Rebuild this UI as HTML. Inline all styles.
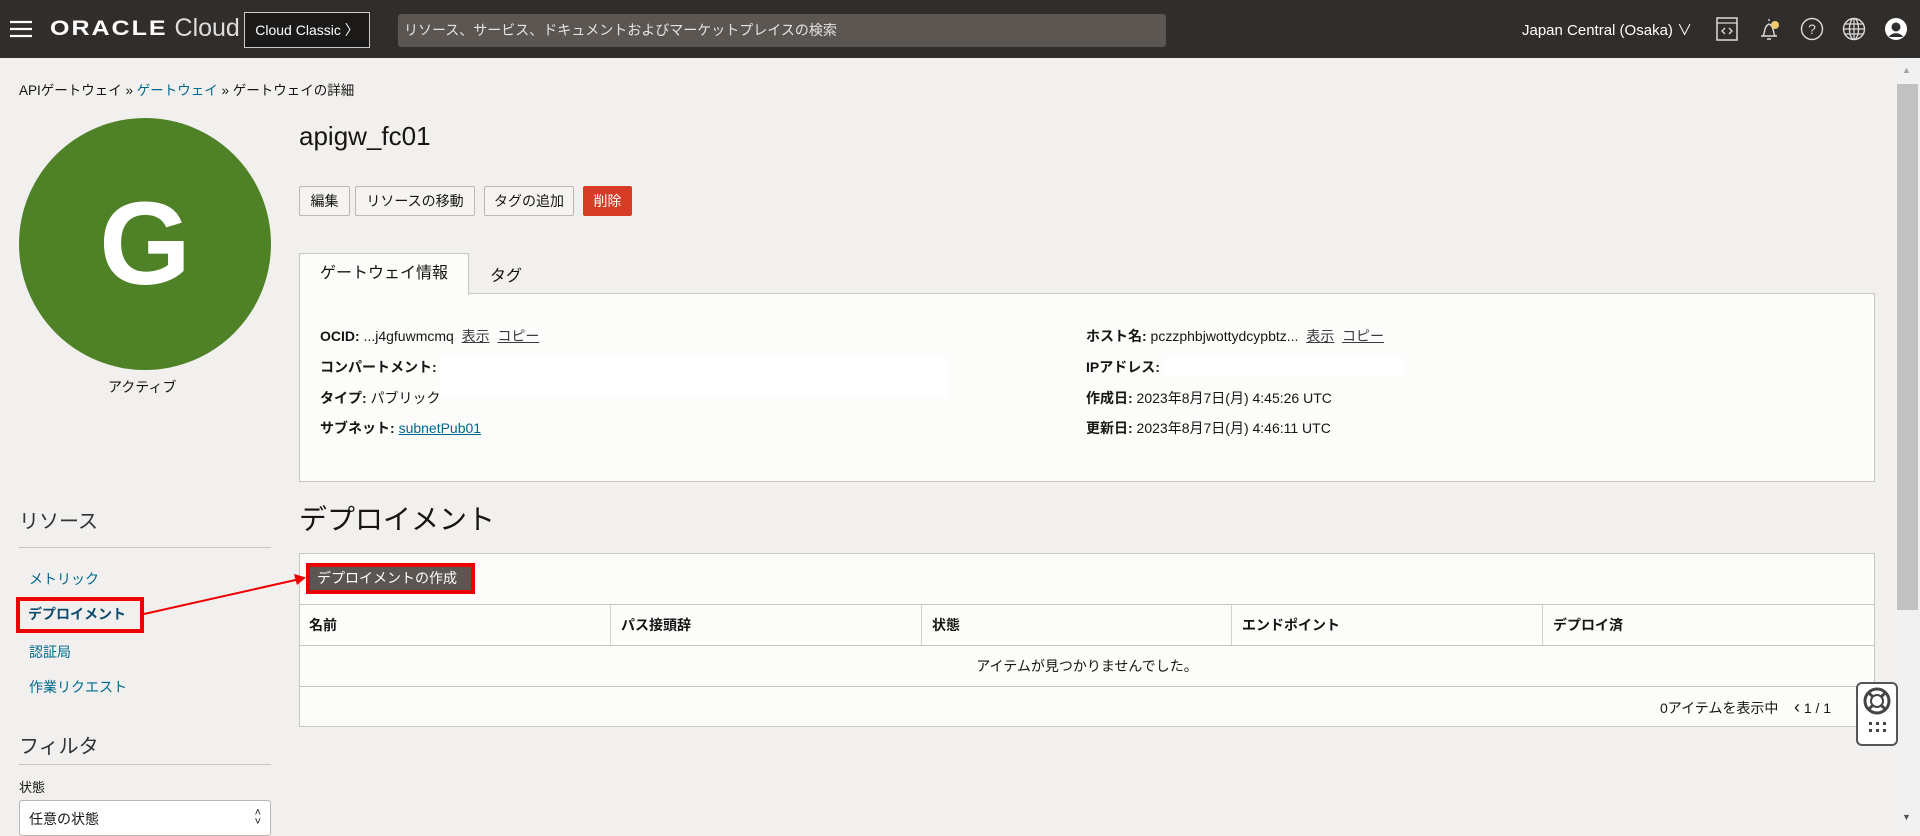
<!DOCTYPE html>
<html><head><meta charset="utf-8"><style>
*{box-sizing:border-box;margin:0;padding:0}
body{width:1920px;height:829px;overflow:hidden;background:#f1f0ef;font-family:"Liberation Sans","Noto Sans CJK JP",sans-serif;color:#161513;font-size:14px;position:relative}
.a{position:absolute;white-space:nowrap}
#hdr{position:absolute;left:0;top:0;width:1920px;height:58px;background:#312d2a}
.link{color:#00688c}
.btn{position:absolute;top:186px;height:30px;border:1px solid #bcb8b4;background:#f5f4f2;border-radius:2px;font-size:14px;line-height:28px;text-align:center}
.panel{position:absolute;background:#fcfcfb;border:1px solid #c9c6c2}
.lbl{font-weight:bold}
u{color:#3b3b3b}
.th{position:absolute;top:0;height:40px;line-height:40px;font-weight:bold;padding-left:10px;border-left:1px solid #d4d1cd}
</style></head><body>
<div id="hdr">
 <svg class="a" style="left:9px;top:19px" width="24" height="20"><path d="M1 3H23M1 10H23M1 17H23" stroke="#fff" stroke-width="2.2"/></svg>
 <div class="a" style="left:50px;top:14px;color:#fff;font-size:25px"><span style="letter-spacing:2px;font-weight:bold;transform:scaleY(0.85);display:inline-block">ORACLE</span> <span style="color:#ddd">Cloud</span></div>
 <div class="a" style="left:244px;top:12px;width:126px;height:36px;border:1px solid #ccc;background:#1c1a18;color:#fff;font-size:14px;line-height:34px;text-align:center">Cloud Classic 〉</div>
 <div class="a" style="left:398px;top:14px;width:768px;height:33px;background:#5b5652;border-radius:3px;color:#e6e3e0;font-size:14px;line-height:33px;padding-left:6px">リソース、サービス、ドキュメントおよびマーケットプレイスの検索</div>
 <div class="a" style="left:1522px;top:19px;color:#fff;font-size:15px">Japan Central (Osaka) ∨</div>
 <svg class="a" style="left:1716px;top:17px" width="22" height="24"><rect x="1" y="1" width="20" height="22" fill="none" stroke="#ddd" stroke-width="1.5"/><path d="M1 6H21M9 11l-3 3 3 3M13 11l3 3-3 3" stroke="#ddd" fill="none" stroke-width="1.3"/></svg>
 <svg class="a" style="left:1758px;top:17px" width="24" height="26"><path d="M11 2v2M5 19c2-3 1-10 6-12 5 2 4 9 6 12zM3 19H19M9 22h4" stroke="#ddd" fill="none" stroke-width="1.4"/><circle cx="17" cy="8" r="4" fill="#f0cc71"/></svg>
 <svg class="a" style="left:1800px;top:17px" width="24" height="24"><circle cx="12" cy="12" r="10.5" stroke="#ddd" fill="none" stroke-width="1.4"/><text x="12" y="17" fill="#ddd" font-size="14" text-anchor="middle" font-family="Liberation Sans">?</text></svg>
 <svg class="a" style="left:1842px;top:17px" width="24" height="24"><circle cx="12" cy="12" r="10.5" stroke="#ddd" fill="none" stroke-width="1.4"/><ellipse cx="12" cy="12" rx="4.5" ry="10.5" stroke="#ddd" fill="none" stroke-width="1.3"/><path d="M1.5 12H22.5M3 7H21M3 17H21M12 1.5V22.5" stroke="#ddd" stroke-width="1.2"/></svg>
 <svg class="a" style="left:1884px;top:17px" width="24" height="24"><circle cx="12" cy="12" r="11" fill="#fff"/><circle cx="12" cy="10" r="4.5" fill="#312d2a"/><path d="M5 20c2-5 12-5 14 0" fill="#312d2a"/></svg>
</div>
<div class="a" style="left:1896px;top:58px;width:24px;height:771px;background:#f1f1f1"></div>
<div class="a" style="left:1897px;top:84px;width:21px;height:526px;background:#c1c1c1"></div>
<div class="a" style="left:1902px;top:65px;font-size:9px;color:#a3a3a3">▲</div>
<div class="a" style="left:1902px;top:812px;font-size:9px;color:#505050">▼</div>

<div class="a" style="left:19px;top:79px;font-size:13.5px">APIゲートウェイ » <span class="link">ゲートウェイ</span> » ゲートウェイの詳細</div>
<div class="a" style="left:19px;top:118px;width:252px;height:252px;border-radius:50%;background:#4f8226;color:#fff;font-size:118px;font-weight:bold;text-align:center;line-height:252px">G</div>
<div class="a" style="left:108px;top:377px;font-size:14px">アクティブ</div>

<div class="a" style="left:299px;top:121px;font-size:26px">apigw_fc01</div>
<div class="btn" style="left:299px;width:51px">編集</div>
<div class="btn" style="left:355px;width:120px">リソースの移動</div>
<div class="btn" style="left:484px;width:90px">タグの追加</div>
<div class="btn" style="left:583px;width:49px;background:#d63b25;border-color:#d63b25;color:#fff">削除</div>

<div class="a" style="left:299px;top:253px;width:170px;height:42px;background:#fcfcfb;border:1px solid #c9c6c2;border-bottom:none;z-index:2;font-size:16px;line-height:40px;text-align:center">ゲートウェイ情報</div>
<div class="a" style="left:490px;top:262px;font-size:16px">タグ</div>
<div class="panel" style="left:299px;top:293px;width:1576px;height:189px"></div>
<div class="a" style="left:440px;top:358px;width:507px;height:40px;background:#fff"></div>
<div class="a" style="left:1163px;top:358px;width:240px;height:18px;background:#fff"></div>
<div class="a" style="left:320px;top:326px"><span class="lbl">OCID:</span> ...j4gfuwmcmq &nbsp;<u>表示</u> &nbsp;<u>コピー</u></div>
<div class="a" style="left:320px;top:357px"><span class="lbl">コンパートメント:</span></div>
<div class="a" style="left:320px;top:388px"><span class="lbl">タイプ:</span> パブリック</div>
<div class="a" style="left:320px;top:418px"><span class="lbl">サブネット:</span> <u class="link" style="color:#00688c">subnetPub01</u></div>
<div class="a" style="left:1086px;top:326px"><span class="lbl">ホスト名:</span> pczzphbjwottydcypbtz... &nbsp;<u>表示</u> &nbsp;<u>コピー</u></div>
<div class="a" style="left:1086px;top:357px"><span class="lbl">IPアドレス:</span></div>
<div class="a" style="left:1086px;top:388px"><span class="lbl">作成日:</span> 2023年8月7日(月) 4:45:26 UTC</div>
<div class="a" style="left:1086px;top:418px"><span class="lbl">更新日:</span> 2023年8月7日(月) 4:46:11 UTC</div>

<div class="a" style="left:19px;top:505px;font-size:20px;color:#333">リソース</div>
<div class="a" style="left:19px;top:547px;width:252px;height:1px;background:#c9c6c2"></div>
<div class="a link" style="left:29px;top:569px">メトリック</div>
<div class="a" style="left:16px;top:597px;width:128px;height:36px;border:4px solid #e00"></div>
<div class="a" style="left:28px;top:604px;color:#0c4a6e;font-weight:bold">デプロイメント</div>
<div class="a link" style="left:29px;top:642px">認証局</div>
<div class="a link" style="left:29px;top:677px">作業リクエスト</div>
<div class="a" style="left:19px;top:730px;font-size:20px;color:#333">フィルタ</div>
<div class="a" style="left:19px;top:764px;width:252px;height:1px;background:#c9c6c2"></div>
<div class="a" style="left:19px;top:777px;font-size:13px">状態</div>
<div class="a" style="left:19px;top:800px;width:252px;height:36px;background:#fff;border:1px solid #b8b5b2;border-radius:3px;padding:8px 9px">任意の状態<span style="float:right;font-size:11px;line-height:9px;text-align:center">˄<br>˅</span></div>

<div class="a" style="left:299px;top:498px;font-size:28px">デプロイメント</div>
<div class="panel" style="left:299px;top:553px;width:1576px;height:174px"></div>
<div class="a" style="left:306px;top:563px;width:169px;height:31px;border:4px solid #e00;background:#5b5652;color:#fff;font-size:14px;line-height:23px;padding-left:7px">デプロイメントの作成</div>
<svg class="a" style="left:140px;top:570px;overflow:visible" width="170" height="50"><path d="M4 44L160 9" stroke="#e00" stroke-width="2"/><path d="M166 7.5L154 4L157 15z" fill="#e00"/></svg>
<div class="a" style="left:299px;top:604px;width:1576px;height:42px;border-top:1px solid #c9c6c2;border-bottom:1px solid #c9c6c2">
 <div class="th" style="left:0;border-left:none">名前</div>
 <div class="th" style="left:311px">パス接頭辞</div>
 <div class="th" style="left:622px">状態</div>
 <div class="th" style="left:932px">エンドポイント</div>
 <div class="th" style="left:1243px">デプロイ済</div>
</div>
<div class="a" style="left:299px;top:646px;width:1576px;height:41px;border-bottom:1px solid #c9c6c2;text-align:center;line-height:40px">アイテムが見つかりませんでした。</div>
<div class="a" style="left:1660px;top:697px">0アイテムを表示中 &nbsp;&nbsp; <span style="font-size:18px">‹</span> 1 / 1</div>

<div class="a" style="left:1856px;top:682px;width:42px;height:64px;background:#fff;border:2px solid #555;border-radius:6px"></div>
<svg class="a" style="left:1859px;top:686px" width="36" height="58"><circle cx="18" cy="15" r="12" fill="none" stroke="#444" stroke-width="3"/><circle cx="18" cy="15" r="6" fill="none" stroke="#444" stroke-width="2"/><path d="M10 7l4 4M26 7l-4 4M10 23l4-4M26 23l-4-4" stroke="#444" stroke-width="3"/><g fill="#444"><rect x="10" y="36" width="3" height="3"/><rect x="17" y="36" width="3" height="3"/><rect x="24" y="36" width="3" height="3"/><rect x="10" y="43" width="3" height="3"/><rect x="17" y="43" width="3" height="3"/><rect x="24" y="43" width="3" height="3"/></g></svg>
</body></html>
